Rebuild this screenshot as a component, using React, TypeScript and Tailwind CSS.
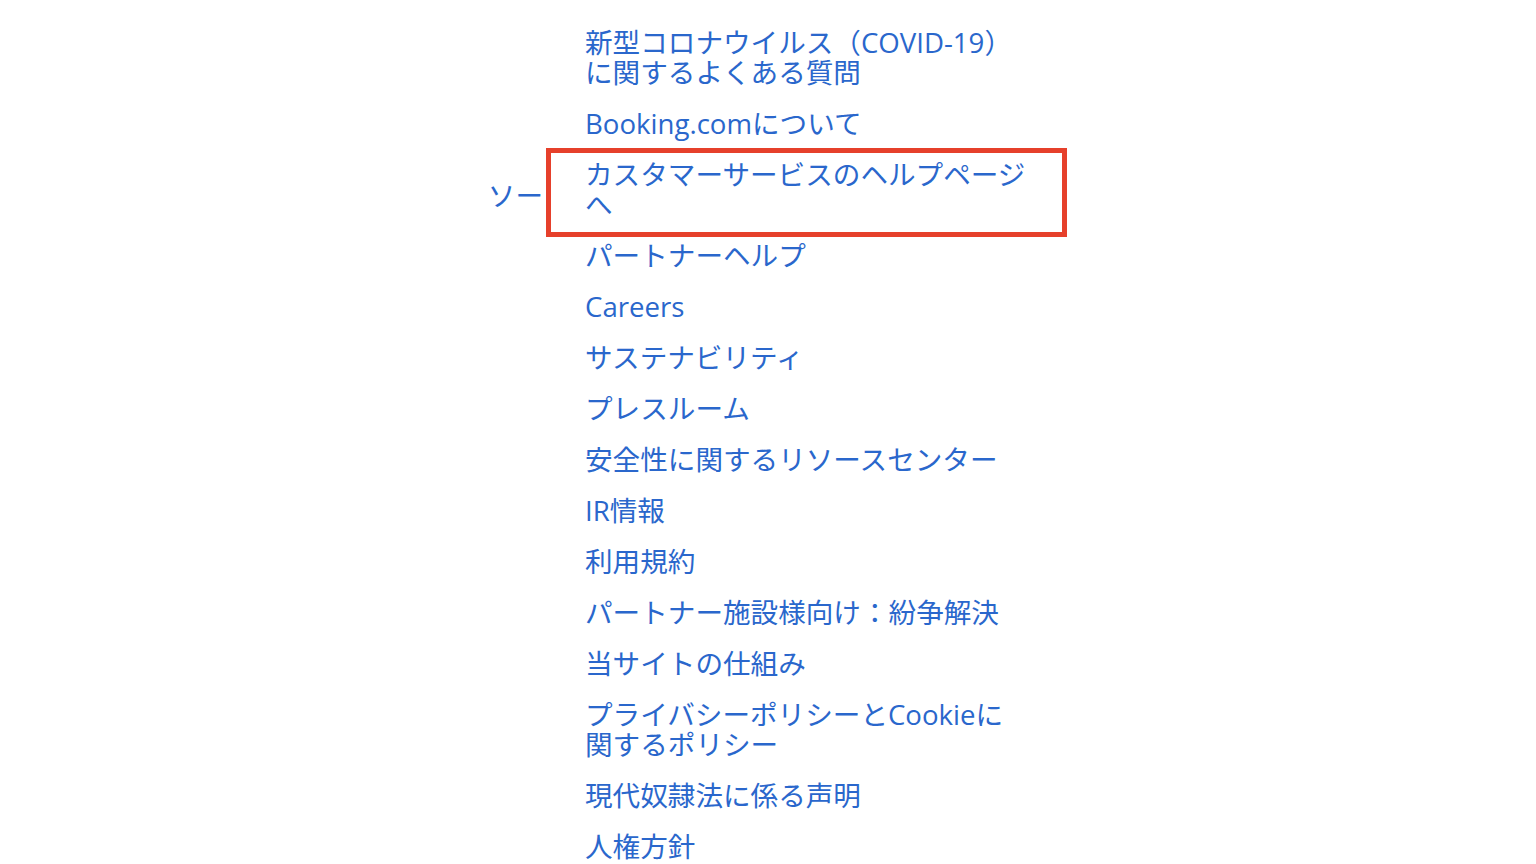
import React from 'react';

type FooterLink = {
  lines: string[];
  highlighted?: boolean;
};

const links: FooterLink[] = [
  { lines: ['新型コロナウイルス（COVID-19）', 'に関するよくある質問'] },
  { lines: ['Booking.comについて'] },
  { lines: ['カスタマーサービスのヘルプページ', 'へ'], highlighted: true },
  { lines: ['パートナーヘルプ'] },
  { lines: ['Careers'] },
  { lines: ['サステナビリティ'] },
  { lines: ['プレスルーム'] },
  { lines: ['安全性に関するリソースセンター'] },
  { lines: ['IR情報'] },
  { lines: ['利用規約'] },
  { lines: ['パートナー施設様向け：紛争解決'] },
  { lines: ['当サイトの仕組み'] },
  { lines: ['プライバシーポリシーとCookieに', '関するポリシー'] },
  { lines: ['現代奴隷法に係る声明'] },
  { lines: ['人権方針'] },
];

const App: React.FC = () => {
  return (
    <div
      className="h-screen w-full bg-white overflow-hidden text-[27.6px] leading-[30px] text-[#2a67cc]"
      style={{ fontFamily: '"Open Sans", "Noto Sans CJK JP", sans-serif' }}
    >
      <div className="flex pt-[27px]">
        {/* clipped tail of the neighbouring column */}
        <div className="w-[543px] shrink-0 text-right">
          <div className="mt-[153px] whitespace-nowrap">ソー</div>
        </div>

        <ul className="ml-[42px] flex flex-col gap-[21px]">
          {links.map((link, i) => (
            <li key={i} className="relative">
              {link.highlighted && (
                <span className="pointer-events-none absolute left-[-39px] top-[-11px] h-[89px] w-[521px] border-[5px] border-[#e6402b]" />
              )}
              <a href="#" className="block">
                {link.lines.map((line, j) => (
                  <span key={j} className="block whitespace-nowrap">
                    {line}
                  </span>
                ))}
              </a>
            </li>
          ))}
        </ul>
      </div>
    </div>
  );
};

export default App;
